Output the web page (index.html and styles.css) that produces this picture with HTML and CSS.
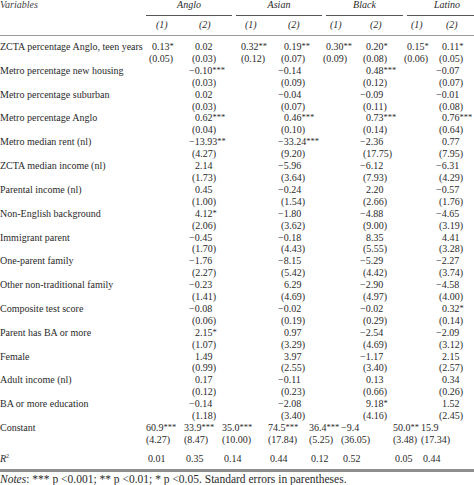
FILE: index.html
```html
<!DOCTYPE html>
<html>
<head>
<meta charset="utf-8">
<link rel="stylesheet" href="styles.css">
</head>
<body>
<div class="table">
  <div class="groups">
    <div class="varhead">Variables</div>
    <div class="group">Anglo</div>
    <div class="group">Asian</div>
    <div class="group">Black</div>
    <div class="group">Latino</div>
  </div>
  <div class="models grid">
    <div></div>
    <div>(1)</div><div>(2)</div>
    <div>(1)</div><div>(2)</div>
    <div>(1)</div><div>(2)</div>
    <div>(1)</div><div>(2)</div>
  </div>
  <div class="tbody grid">
    <div class="lbl">ZCTA percentage Anglo, teen years</div>
    <div>0.13<span class="st">*</span></div><div>0.02</div><div>0.32<span class="st">**</span></div><div>0.19<span class="st">**</span></div><div>0.30<span class="st">**</span></div><div>0.20<span class="st">*</span></div><div>0.15<span class="st">*</span></div><div>0.11<span class="st">*</span></div>
    <div></div>
    <div class="se">(0.05)</div><div class="se">(0.03)</div><div>(0.12)</div><div class="se">(0.07)</div><div class="se">(0.09)</div><div class="se">(0.08)</div><div class="se">(0.06)</div><div class="se">(0.05)</div>

    <div class="lbl">Metro percentage new housing</div>
    <div></div><div class="neg">−0.10<span class="st">***</span></div><div></div><div class="neg">−0.14</div><div></div><div>0.48<span class="st">***</span></div><div></div><div class="neg">−0.07</div>
    <div></div>
    <div></div><div class="se">(0.03)</div><div></div><div class="se">(0.09)</div><div></div><div class="se">(0.12)</div><div></div><div class="se">(0.07)</div>

    <div class="lbl">Metro percentage suburban</div>
    <div></div><div>0.02</div><div></div><div class="neg">−0.04</div><div></div><div class="neg">−0.09</div><div></div><div class="neg">−0.01</div>
    <div></div>
    <div></div><div class="se">(0.03)</div><div></div><div class="se">(0.07)</div><div></div><div class="se">(0.11)</div><div></div><div class="se">(0.08)</div>

    <div class="lbl">Metro percentage Anglo</div>
    <div></div><div>0.62<span class="st">***</span></div><div></div><div>0.46<span class="st">***</span></div><div></div><div>0.73<span class="st">***</span></div><div></div><div>0.76<span class="st">***</span></div>
    <div></div>
    <div></div><div class="se">(0.04)</div><div></div><div class="se">(0.10)</div><div></div><div class="se">(0.14)</div><div></div><div class="se">(0.64)</div>

    <div class="lbl">Metro median rent (nl)</div>
    <div></div><div class="neg">−13.93<span class="st">**</span></div><div></div><div class="neg">−33.24<span class="st">***</span></div><div></div><div class="neg">−2.36</div><div></div><div>0.77</div>
    <div></div>
    <div></div><div class="se">(4.27)</div><div></div><div class="se">(9.20)</div><div></div><div class="se">(17.75)</div><div></div><div class="se">(7.95)</div>

    <div class="lbl">ZCTA median income (nl)</div>
    <div></div><div>2.14</div><div></div><div class="neg">−5.96</div><div></div><div class="neg">−6.12</div><div></div><div class="neg">−6.31</div>
    <div></div>
    <div></div><div class="se">(1.73)</div><div></div><div class="se">(3.64)</div><div></div><div class="se">(7.93)</div><div></div><div class="se">(4.29)</div>

    <div class="lbl">Parental income (nl)</div>
    <div></div><div>0.45</div><div></div><div class="neg">−0.24</div><div></div><div>2.20</div><div></div><div class="neg">−0.57</div>
    <div></div>
    <div></div><div class="se">(1.00)</div><div></div><div class="se">(1.54)</div><div></div><div class="se">(2.66)</div><div></div><div class="se">(1.76)</div>

    <div class="lbl">Non-English background</div>
    <div></div><div>4.12<span class="st">*</span></div><div></div><div class="neg">−1.80</div><div></div><div class="neg">−4.88</div><div></div><div class="neg">−4.65</div>
    <div></div>
    <div></div><div class="se">(2.06)</div><div></div><div class="se">(3.62)</div><div></div><div class="se">(9.00)</div><div></div><div class="se">(3.19)</div>

    <div class="lbl">Immigrant parent</div>
    <div></div><div class="neg">−0.45</div><div></div><div class="neg">−0.18</div><div></div><div>8.35</div><div></div><div>4.41</div>
    <div></div>
    <div></div><div class="se">(1.70)</div><div></div><div class="se">(4.43)</div><div></div><div class="se">(5.55)</div><div></div><div class="se">(3.28)</div>

    <div class="lbl">One-parent family</div>
    <div></div><div class="neg">−1.76</div><div></div><div class="neg">−8.15</div><div></div><div class="neg">−5.29</div><div></div><div class="neg">−2.27</div>
    <div></div>
    <div></div><div class="se">(2.27)</div><div></div><div class="se">(5.42)</div><div></div><div class="se">(4.42)</div><div></div><div class="se">(3.74)</div>

    <div class="lbl">Other non-traditional family</div>
    <div></div><div class="neg">−0.23</div><div></div><div>6.29</div><div></div><div class="neg">−2.90</div><div></div><div class="neg">−4.58</div>
    <div></div>
    <div></div><div class="se">(1.41)</div><div></div><div class="se">(4.69)</div><div></div><div class="se">(4.97)</div><div></div><div class="se">(4.00)</div>

    <div class="lbl">Composite test score</div>
    <div></div><div class="neg">−0.08</div><div></div><div class="neg">−0.02</div><div></div><div class="neg">−0.02</div><div></div><div>0.32<span class="st">*</span></div>
    <div></div>
    <div></div><div class="se">(0.06)</div><div></div><div class="se">(0.19)</div><div></div><div class="se">(0.29)</div><div></div><div class="se">(0.14)</div>

    <div class="lbl">Parent has BA or more</div>
    <div></div><div>2.15<span class="st">*</span></div><div></div><div>0.97</div><div></div><div class="neg">−2.54</div><div></div><div class="neg">−2.09</div>
    <div></div>
    <div></div><div class="se">(1.07)</div><div></div><div class="se">(3.29)</div><div></div><div class="se">(4.69)</div><div></div><div class="se">(3.12)</div>

    <div class="lbl">Female</div>
    <div></div><div>1.49</div><div></div><div>3.97</div><div></div><div class="neg">−1.17</div><div></div><div>2.15</div>
    <div></div>
    <div></div><div class="se">(0.99)</div><div></div><div class="se">(2.55)</div><div></div><div class="se">(3.40)</div><div></div><div class="se">(2.57)</div>

    <div class="lbl">Adult income (nl)</div>
    <div></div><div>0.17</div><div></div><div class="neg">−0.11</div><div></div><div>0.13</div><div></div><div>0.34</div>
    <div></div>
    <div></div><div class="se">(0.12)</div><div></div><div class="se">(0.23)</div><div></div><div class="se">(0.66)</div><div></div><div class="se">(0.26)</div>

    <div class="lbl">BA or more education</div>
    <div></div><div class="neg">−0.14</div><div></div><div class="neg">−2.08</div><div></div><div>9.18<span class="st">*</span></div><div></div><div>1.52</div>
    <div></div>
    <div></div><div class="se">(1.18)</div><div></div><div class="se">(3.40)</div><div></div><div class="se">(4.16)</div><div></div><div class="se">(2.45)</div>
  </div>
  <div class="foot">
    <div class="lbl">Constant</div>
    <div>60.9<span class="st">***</span></div><div>33.9<span class="st">***</span></div><div>35.0<span class="st">***</span></div><div>74.5<span class="st">***</span></div><div>36.4<span class="st">***</span></div><div>−9.4</div><div>50.0<span class="st">**</span></div><div>15.9</div>
    <div></div>
    <div>(4.27)</div><div>(8.47)</div><div>(10.00)</div><div>(17.84)</div><div>(5.25)</div><div>(36.05)</div><div>(3.48)</div><div>(17.34)</div>
  </div>
  <div class="foot r2">
    <div class="lbl"><i>R</i><sup>2</sup></div>
    <div>0.01</div><div>0.35</div><div>0.14</div><div>0.44</div><div>0.12</div><div>0.52</div><div>0.05</div><div>0.44</div>
  </div>
</div>
<p class="notes"><i>Notes</i>: *** p &lt;0.001; ** p &lt;0.01; * p &lt;0.05. Standard errors in parentheses.</p>
</body>
</html>
```
FILE: styles.css
```css
html, body {
  margin: 0;
  padding: 0;
  background: #ffffff;
  overflow: hidden;
}
body {
  font-family: "Liberation Serif", "Times New Roman", serif;
  font-size: 10px;
  color: #2a2a2a;
}
.table {
  width: 484px;
}
.groups {
  display: grid;
  grid-template-columns: 146px 82px 86px 77px 80px;
  column-gap: 4px;
  line-height: 12px;
  margin-top: -1px;
}
.groups > div:nth-child(2) {
  margin-left: -4px;
}
.varhead {
  font-style: italic;
  color: #444;
}
.group {
  font-style: italic;
  text-align: center;
  padding-bottom: 4px;
  border-bottom: 1px solid #555;
}
.grid {
  display: grid;
  grid-template-columns: 152px 43px 46px 43px 42px 40px 41px 35px 42px;
}
.models {
  line-height: 12px;
  padding-top: 3px;
  padding-bottom: 4px;
  border-bottom: 1px solid #9a9a9a;
  font-style: italic;
  width: 474px;
}
.models > div {
  padding-left: 4px;
}
.tbody {
  padding-top: 5px;
  line-height: 11.9px;
  white-space: nowrap;
}
.lbl {
  white-space: nowrap;
}
.st {
  font-size: 8.5px;
  vertical-align: 1px;
}
.neg {
  margin-left: -6px;
}
.se {
  margin-left: -3px;
}
.foot {
  display: grid;
  grid-template-columns: 146px 38px 38px 46px 41px 32px 52px 28px 63px;
  line-height: 11.9px;
  white-space: nowrap;
}
.r2 {
  margin-top: 7px;
  line-height: 12px;
  padding-bottom: 4px;
  border-bottom: 3px solid #8e8e8e;
  width: 474px;
}
.r2 > div {
  padding-left: 2px;
}
.r2 > .lbl {
  padding-left: 0;
}
.r2 sup {
  font-size: 6px;
  line-height: 0;
  vertical-align: 4px;
}
.notes {
  margin: 1px 0 0 0;
  font-size: 11.5px;
  line-height: 12px;
  white-space: nowrap;
}
```
